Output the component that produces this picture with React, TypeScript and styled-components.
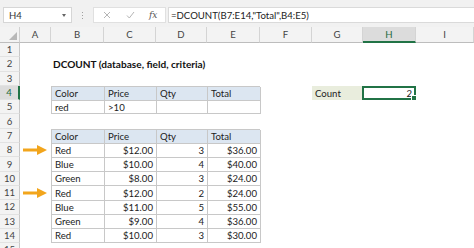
import React from "react";
import styled, { createGlobalStyle, css } from "styled-components";

const Global = createGlobalStyle`
  html, body { margin: 0; padding: 0; background: #ffffff; overflow: hidden; }
  body { font-family: Lato, "Liberation Sans", sans-serif; }
  * { box-sizing: border-box; }
`;

const Page = styled.div`
  width: 474px;
  height: 248px;
  display: flex;
  flex-direction: column;
  overflow: hidden;
  background: #ffffff;
`;

const FormulaBar = styled.div`
  height: 27px;
  flex: none;
  background: #f1f1f1;
  display: flex;
  align-items: flex-start;
  padding: 7px 0 0 3px;
  gap: 0;
`;

const NameBox = styled.div`
  width: 69px;
  height: 16px;
  background: #ffffff;
  border: 1px solid #d6d6d6;
  display: flex;
  align-items: center;
  justify-content: space-between;
  padding: 0 5px 0 5px;
  font-size: 9.5px;
  color: #333;
`;

const Caret = styled.span`
  width: 0;
  height: 0;
  border-left: 2.5px solid transparent;
  border-right: 2.5px solid transparent;
  border-top: 3px solid #666;
`;

const Dots = styled.div`
  width: 21px;
  height: 16px;
  display: flex;
  flex-direction: column;
  align-items: center;
  justify-content: center;
  gap: 2px;
  & > span {
    width: 1px;
    height: 1px;
    background: #a0a0a0;
  }
`;

const IconBox = styled.div`
  width: 73px;
  height: 16px;
  background: #ffffff;
  border: 1px solid #e0e0e0;
  display: flex;
  align-items: center;
  padding-left: 9px;
  gap: 15px;
  color: #b0b0b0;
`;

const Fx = styled.span`
  font-family: "DejaVu Serif", "Liberation Serif", serif;
  font-style: italic;
  font-size: 9px;
  color: #555;
  margin-left: -1px;
`;

const FormulaInput = styled.div`
  flex: 1;
  height: 16px;
  margin-left: 2px;
  background: #ffffff;
  border: 1px solid #dadada;
  border-right: none;
  display: flex;
  align-items: center;
  padding-left: 2px;
  font-size: 9.6px;
  color: #222;
  white-space: nowrap;
`;

const Sheet = styled.div`
  flex: 1;
  display: grid;
  grid-template-columns: 20px 31px 53px 52px 51px 53px 52px 51px 53px 1fr;
  grid-template-rows: 16px repeat(15, 14.3px);
  background: #ffffff;
  font-size: 9.6px;
  color: #222;
`;

const Corner = styled.div`
  grid-column: 1;
  grid-row: 1;
  background: #f3f3f3;
  border-right: 1px solid #d0d0d0;
  border-bottom: 1px solid #bdbdbd;
  position: relative;
  &::after {
    content: "";
    position: absolute;
    right: 2px;
    bottom: 2px;
    width: 0;
    height: 0;
    border-left: 8px solid transparent;
    border-bottom: 8px solid #b8b8b8;
  }
`;

const ColHead = styled.div<{ $col: number; $sel?: boolean }>`
  grid-column: ${(p) => p.$col};
  grid-row: 1;
  background: #f3f3f3;
  border-right: 1px solid #d4d4d4;
  border-bottom: 1px solid #bdbdbd;
  display: flex;
  align-items: center;
  justify-content: center;
  font-size: 9.6px;
  color: #444;
  ${(p) =>
    p.$sel &&
    css`
      background: #dcdcdc;
      color: #1e6b41;
      border-bottom: 2px solid #217346;
    `}
`;

const RowHead = styled.div<{ $row: number; $sel?: boolean }>`
  grid-column: 1;
  grid-row: ${(p) => p.$row};
  background: #f3f3f3;
  border-right: 1px solid #c8c8c8;
  border-bottom: 1px solid #e2e2e2;
  display: flex;
  align-items: center;
  justify-content: center;
  font-size: 9.6px;
  color: #444;
  ${(p) =>
    p.$sel &&
    css`
      background: #dcdcdc;
      color: #1e6b41;
      border-right: 2px solid #217346;
    `}
`;

const Title = styled.div`
  grid-column: 3 / span 6;
  grid-row: 3;
  display: flex;
  align-items: center;
  padding-left: 2px;
  font-weight: 700;
  font-size: 10.1px;
  color: #111;
  white-space: nowrap;
`;

const Table = styled.div<{ $row: number; $rows: number }>`
  grid-column: 3 / span 4;
  grid-row: ${(p) => p.$row} / span ${(p) => p.$rows};
  display: grid;
  grid-template-columns: 53px 52px 51px 53px;
  grid-template-rows: repeat(${(p) => p.$rows}, 1fr);
  border-top: 1px solid #c8c8c8;
  border-left: 1px solid #c8c8c8;
`;

const Cell = styled.div<{ $head?: boolean; $num?: boolean }>`
  border-right: 1px solid #c8c8c8;
  border-bottom: 1px solid #c8c8c8;
  display: flex;
  align-items: center;
  justify-content: ${(p) => (p.$num ? "flex-end" : "flex-start")};
  padding: 0 3px 0 3px;
  background: ${(p) => (p.$head ? "#dce6f1" : "#ffffff")};
  white-space: nowrap;
  overflow: hidden;
`;

const CountLabel = styled.div`
  grid-column: 8;
  grid-row: 5;
  background: #e9eddd;
  display: flex;
  align-items: center;
  padding-left: 3px;
`;

const Selected = styled.div`
  grid-column: 9;
  grid-row: 5;
  border: 2px solid #217346;
  margin-left: -1px;
  display: flex;
  align-items: center;
  justify-content: flex-end;
  padding-right: 2px;
  position: relative;
  &::after {
    content: "";
    position: absolute;
    right: -3px;
    bottom: -3px;
    width: 4px;
    height: 4px;
    background: #217346;
    border: 1px solid #ffffff;
  }
`;

const ArrowCell = styled.div<{ $row: number }>`
  grid-column: 2;
  grid-row: ${(p) => p.$row};
  display: flex;
  align-items: center;
  padding-left: 3px;
`;

const Arrow = () => (
  <svg width="24" height="10" viewBox="0 0 24 10">
    <polygon points="0,3.4 14,3.4 14,0 24,5 14,10 14,6.6 0,6.6" fill="#f2a51c" />
  </svg>
);

const XIcon = () => (
  <svg width="8" height="8" viewBox="0 0 8 8">
    <path d="M1 1 L7 7 M7 1 L1 7" stroke="#b5b5b5" strokeWidth="1" fill="none" />
  </svg>
);

const CheckIcon = () => (
  <svg width="9" height="8" viewBox="0 0 9 8">
    <path d="M1 4.5 L3.3 7 L8 1" stroke="#b5b5b5" strokeWidth="1" fill="none" />
  </svg>
);

const cols = ["A", "B", "C", "D", "E", "F", "G", "H", "I"];

const criteria = [
  ["Color", "Price", "Qty", "Total"],
  ["red", ">10", "", ""],
];

const data: [string, string, string, string][] = [
  ["Red", "$12.00", "3", "$36.00"],
  ["Blue", "$10.00", "4", "$40.00"],
  ["Green", "$8.00", "3", "$24.00"],
  ["Red", "$12.00", "2", "$24.00"],
  ["Blue", "$11.00", "5", "$55.00"],
  ["Green", "$9.00", "4", "$36.00"],
  ["Red", "$10.00", "3", "$30.00"],
];

export default function App() {
  return (
    <Page>
      <Global />
      <FormulaBar>
        <NameBox>
          <span>H4</span>
          <Caret />
        </NameBox>
        <Dots>
          <span />
          <span />
          <span />
        </Dots>
        <IconBox>
          <XIcon />
          <CheckIcon />
          <Fx>fx</Fx>
        </IconBox>
        <FormulaInput>=DCOUNT(B7:E14,"Total",B4:E5)</FormulaInput>
      </FormulaBar>
      <Sheet>
        <Corner />
        {cols.map((c, i) => (
          <ColHead key={c} $col={i + 2} $sel={c === "H"}>
            {c}
          </ColHead>
        ))}
        {Array.from({ length: 15 }, (_, i) => (
          <RowHead key={i} $row={i + 2} $sel={i + 1 === 4}>
            {i + 1}
          </RowHead>
        ))}
        <Title>DCOUNT (database, field, criteria)</Title>
        <Table $row={5} $rows={2}>
          {criteria.map((r, ri) =>
            r.map((v, ci) => (
              <Cell key={`${ri}-${ci}`} $head={ri === 0}>
                {v}
              </Cell>
            ))
          )}
        </Table>
        <CountLabel>Count</CountLabel>
        <Selected>2</Selected>
        <Table $row={8} $rows={8}>
          {["Color", "Price", "Qty", "Total"].map((h) => (
            <Cell key={h} $head>
              {h}
            </Cell>
          ))}
          {data.map((r, ri) =>
            r.map((v, ci) => (
              <Cell key={`${ri}-${ci}`} $num={ci > 0}>
                {v}
              </Cell>
            ))
          )}
        </Table>
        <ArrowCell $row={9}>
          <Arrow />
        </ArrowCell>
        <ArrowCell $row={12}>
          <Arrow />
        </ArrowCell>
      </Sheet>
    </Page>
  );
}
